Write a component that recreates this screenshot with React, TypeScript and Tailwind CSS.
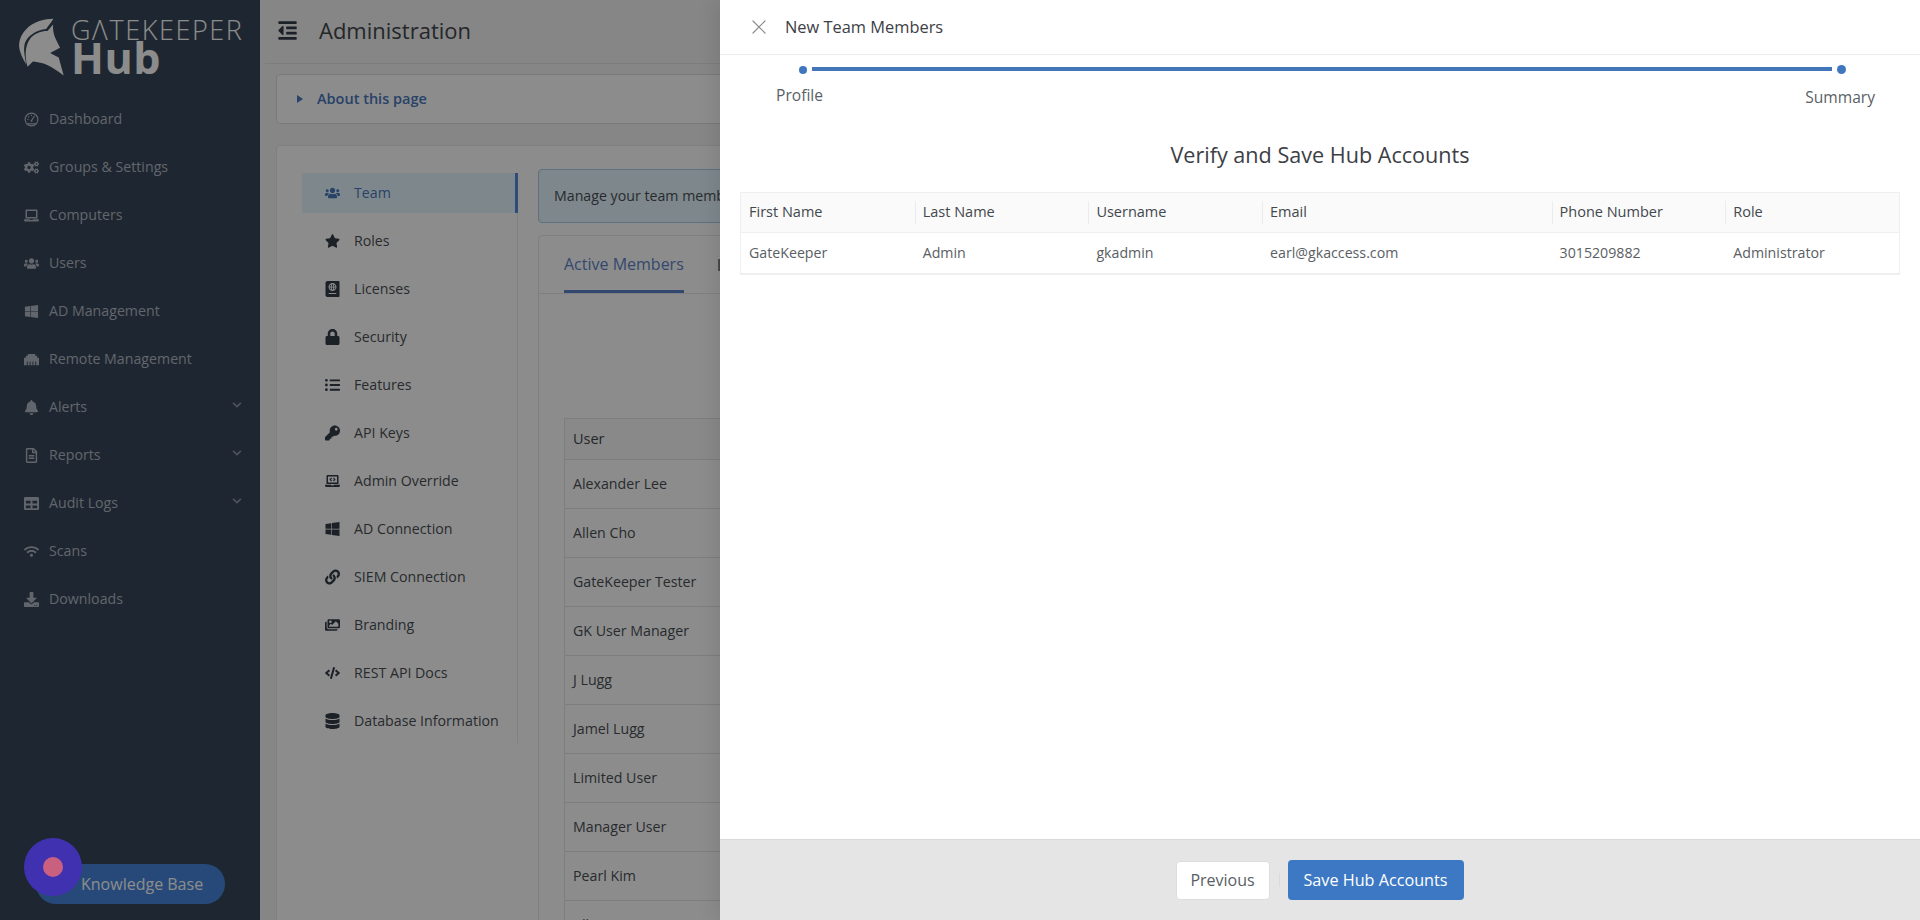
import { ReactNode } from "react";
import {
  FaBell,
  FaChevronDown,
  FaCode,
  FaCogs,
  FaDatabase,
  FaDownload,
  FaEthernet,
  FaImages,
  FaKey,
  FaLaptop,
  FaLaptopCode,
  FaLink,
  FaListUl,
  FaLock,
  FaOutdent,
  FaPassport,
  FaRegFileAlt,
  FaStar,
  FaTable,
  FaUsers,
  FaWifi,
  FaWindows,
} from "react-icons/fa";
import { X } from "lucide-react";

function GaugeIcon() {
  return (
    <svg viewBox="0 0 16 16" className="w-[15px] h-[15px]" fill="none" stroke="currentColor" strokeWidth="1.2">
      <circle cx="8" cy="8" r="6.8" />
      <path d="M8 9 L11 4.5" strokeLinecap="round" />
      <circle cx="8" cy="9.5" r="1" fill="currentColor" stroke="none" />
      <path d="M3.5 8 H4.8 M8 3 V4.2 M4.6 4.8 L5.4 5.6" />
      <path d="M3.5 12.6 H12.5" />
    </svg>
  );
}

const SIDE_ITEMS: { label: string; icon: ReactNode; caret?: boolean }[] = [
  { label: "Dashboard", icon: <GaugeIcon /> },
  { label: "Groups & Settings", icon: <FaCogs /> },
  { label: "Computers", icon: <FaLaptop /> },
  { label: "Users", icon: <FaUsers /> },
  { label: "AD Management", icon: <FaWindows /> },
  { label: "Remote Management", icon: <FaEthernet /> },
  { label: "Alerts", icon: <FaBell />, caret: true },
  { label: "Reports", icon: <FaRegFileAlt />, caret: true },
  { label: "Audit Logs", icon: <FaTable />, caret: true },
  { label: "Scans", icon: <FaWifi /> },
  { label: "Downloads", icon: <FaDownload /> },
];

const ADMIN_ITEMS: { label: string; icon: ReactNode; active?: boolean }[] = [
  { label: "Team", icon: <FaUsers />, active: true },
  { label: "Roles", icon: <FaStar /> },
  { label: "Licenses", icon: <FaPassport /> },
  { label: "Security", icon: <FaLock /> },
  { label: "Features", icon: <FaListUl /> },
  { label: "API Keys", icon: <FaKey /> },
  { label: "Admin Override", icon: <FaLaptopCode /> },
  { label: "AD Connection", icon: <FaWindows /> },
  { label: "SIEM Connection", icon: <FaLink /> },
  { label: "Branding", icon: <FaImages /> },
  { label: "REST API Docs", icon: <FaCode /> },
  { label: "Database Information", icon: <FaDatabase /> },
];

const MEMBERS = [
  "Alexander Lee",
  "Allen Cho",
  "GateKeeper Tester",
  "GK User Manager",
  "J Lugg",
  "Jamel Lugg",
  "Limited User",
  "Manager User",
  "Pearl Kim",
  "Allison Lee",
];

const COLUMNS = [
  { title: "First Name", value: "GateKeeper", width: "w-[15%]" },
  { title: "Last Name", value: "Admin", width: "w-[15%]" },
  { title: "Username", value: "gkadmin", width: "w-[15%]" },
  { title: "Email", value: "earl@gkaccess.com", width: "w-[25%]" },
  { title: "Phone Number", value: "3015209882", width: "w-[15%]" },
  { title: "Role", value: "Administrator", width: "w-[15%]" },
];

function HelmetLogo() {
  return (
    <svg viewBox="20 20 145 180" className="w-[48px] h-[60px] shrink-0" fill="#fff">
      {/* crest */}
      <path d="M130 25 C105 25 70 33 47 57 C28 78 22 100 30 125 C34 140 42 152 48 162 C44 140 38 118 44 98 C52 76 80 58 108 56 C116 45 124 35 130 25 Z" />
      {/* helmet */}
      <path d="M60 84 C72 70 92 62 112 62 C120 52 125 47 129 42 C128 58 130 72 138 88 L150 112 L120 128 L146 142 L161 196 C140 180 115 165 100 160 C88 157 76 155 68 154 L52 170 C46 150 40 110 60 84 Z" />
    </svg>
  );
}

function Sidebar() {
  return (
    <aside className="w-[260px] shrink-0 h-full flex flex-col bg-[#384759] text-[#b3bbc5]">
      <div className="h-[95px] shrink-0 flex pl-[17px] pt-[17px]">
        <HelmetLogo />
        <div className="ml-[6px] text-white">
          <div className="text-[27px] leading-[28px] font-light tracking-[1.6px] -mt-[1px]">GΛTEKEEPER</div>
          <div className="text-[43px] leading-[30px] font-bold tracking-[0.5px] -mt-[1px]">Hub</div>
        </div>
      </div>
      {SIDE_ITEMS.map((item) => (
        <div key={item.label} className="h-12 shrink-0 flex items-center pl-6 pr-4 text-[14.2px]">
          <span className="w-[15px] flex justify-center text-[15px]">{item.icon}</span>
          <span className="ml-[10px] flex-1">{item.label}</span>
          {item.caret && <FaChevronDown className="text-[10px] mr-[2px] -mt-1 opacity-70" />}
        </div>
      ))}
      <div className="mt-auto mb-4 ml-9 w-[189px] h-10 rounded-full bg-[#4586dc] text-white text-[16px] flex items-center pl-[45px]">
        Knowledge Base
      </div>
    </aside>
  );
}

function AdminNav() {
  return (
    <nav className="w-[216px] shrink-0 h-[570px] mt-1 flex flex-col gap-2 border-r border-[#ececec]">
      {ADMIN_ITEMS.map((item) =>
        item.active ? (
          <div
            key={item.label}
            className="h-10 flex items-center pl-[23px] text-[14.2px] bg-[#e6f7ff] text-[#4a78bd] border-r-[3px] border-[#5589e0] -mr-px"
          >
            <span className="w-[15px] flex justify-center text-[16px]">{item.icon}</span>
            <span className="ml-[14px]">{item.label}</span>
          </div>
        ) : (
          <div key={item.label} className="h-10 flex items-center pl-[23px] text-[14.2px] text-[#4a4f55]">
            <span className="w-[15px] flex justify-center text-[16px] text-[#333b47]">{item.icon}</span>
            <span className="ml-[14px]">{item.label}</span>
          </div>
        )
      )}
    </nav>
  );
}

function TeamPanel() {
  return (
    <div className="flex-1 ml-5">
      <div className="h-[54px] flex items-center pl-[15px] rounded bg-[#e6f7ff] border border-[#a9cfe8] text-[14.2px] text-[#4a4f55]">
        Manage your team members
      </div>
      <div className="mt-3 border border-[#e8e8e8] rounded bg-white">
        <div className="h-[58px] flex px-[25px] border-b border-[#e8e8e8] text-[16px]">
          <div className="h-full flex items-center pt-[1px] border-b-[3px] border-[#5b83c8] text-[#5e85c9]">Active Members</div>
          <div className="h-full flex items-center ml-[33px] text-[#4a4f55]">Invited</div>
        </div>
        <div className="mx-[25px] mt-[124px] border border-[#e4e4e4]">
          <div className="h-[41px] flex items-center pl-2 bg-[#fafafa] border-b border-[#e4e4e4] text-[14.5px] font-medium text-[#43474c]">
            User
          </div>
          {MEMBERS.map((name) => (
            <div key={name} className="h-[49px] flex items-center pl-2 border-b border-[#e4e4e4] text-[14.2px] text-[#4a4f55]">
              {name}
            </div>
          ))}
        </div>
      </div>
    </div>
  );
}

function Drawer() {
  return (
    <div className="absolute top-0 right-0 bottom-0 w-[1200px] flex flex-col bg-white shadow-[-6px_0_16px_rgba(0,0,0,0.08)]">
      <div className="h-[55px] shrink-0 flex items-center border-b border-[#ececec] pl-[27px]">
        <X className="w-6 h-6 text-[#8c8c8c]" strokeWidth={1.2} />
        <span className="ml-[14px] text-[16.4px] font-medium text-[#3c4046]">New Team Members</span>
      </div>
      <div className="flex-1">
        <div className="flex items-center pt-[10px] pl-[79px] pr-[74px]">
          <span className="w-2 h-2 rounded-full bg-[#3f76bd]" />
          <span className="flex-1 h-1 mx-[5px] -mt-[1px] bg-[#4276b8]" />
          <span className="w-[9px] h-[9px] rounded-full bg-[#3f76bd]" />
        </div>
        <div className="flex justify-between pl-[56px] pr-[45px] text-[15.6px] text-[#5a5f66]">
          <span className="mt-[10px]">Profile</span>
          <span className="mt-[12px]">Summary</span>
        </div>
        <h2 className="mt-[30px] text-center text-[21.6px] font-medium text-[#3c4046]">Verify and Save Hub Accounts</h2>
        <div className="mx-5 mt-[20px] border border-[#efefef] border-b-2 flex">
          {COLUMNS.map((col, i) => (
            <div key={col.title} className={col.width}>
              <div className="h-10 flex items-center bg-[#fafafa] border-b border-[#efefef] px-2 text-[14.5px] font-medium text-[#43474c] relative">
                {i > 0 && <span className="absolute left-0 top-2 bottom-2 w-px bg-[#ececec]" />}
                {col.title}
              </div>
              <div className="h-10 flex items-center px-2 text-[14.2px] text-[#595e64]">{col.value}</div>
            </div>
          ))}
        </div>
      </div>
      <div className="h-[81px] shrink-0 flex items-center justify-center pr-[1px] bg-[#e5e5e5] border-t border-[#d9d9d9]">
        <button className="w-[94px] h-[39px] rounded bg-white border border-[#dddddd] text-[16px] text-[#595e64]">Previous</button>
        <span className="w-px h-[14px] ml-[9px] mr-[8px] bg-[#dadada]" />
        <button className="w-[176px] h-10 rounded bg-[#3d78c4] text-[16.2px] text-white">Save Hub Accounts</button>
      </div>
    </div>
  );
}

export default function App() {
  return (
    <div className="relative h-screen w-full overflow-hidden flex font-['Open_Sans',sans-serif] bg-[#f5f5f5]">
      <Sidebar />
      <main className="flex-1 min-w-0 h-full">
        <div className="h-[64px] ml-[5px] flex items-center pl-3 pb-[2px] border-b border-[#e2e2e2]">
          <FaOutdent className="text-[21px] text-[#333b47]" />
          <h1 className="ml-[21px] text-[22px] font-medium text-[#43474c]">Administration</h1>
        </div>
        <div className="mx-4 mt-[10px] h-[50px] flex items-center pl-5 pb-[1px] rounded border border-[#dcdcdc] bg-white">
          <span className="w-0 h-0 border-y-[4px] border-y-transparent border-l-[6px] border-l-[#4a78bd]" />
          <span className="ml-[14px] text-[14.5px] font-semibold text-[#4a78bd]">About this page</span>
        </div>
        <div className="mx-4 mt-[21px] h-[900px] flex pl-[25px] pr-5 pt-[23px] rounded border border-[#e8e8e8] bg-white">
          <AdminNav />
          <TeamPanel />
        </div>
      </main>
      <div className="absolute inset-0 bg-black/45" />
      <Drawer />
      <div className="absolute left-6 top-[838px] w-[58px] h-[58px] rounded-full bg-[#4031b0] flex items-center justify-center">
        <span className="w-5 h-5 rounded-full bg-[#c9607f]" />
      </div>
    </div>
  );
}
